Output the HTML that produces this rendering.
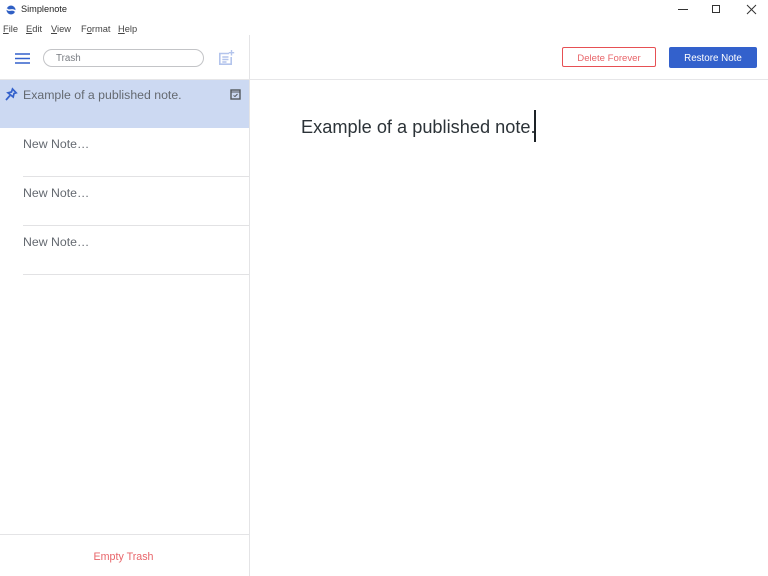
<!DOCTYPE html>
<html><head><meta charset="utf-8"><title>Simplenote</title>
<style>
html,body{margin:0;padding:0;background:#fff;width:768px;height:576px;overflow:hidden}
body{font-family:"Liberation Sans",sans-serif;position:relative}
.a{position:absolute;white-space:nowrap}
u{text-underline-offset:1px}
.menu{top:24px;font-size:9.3px;line-height:11px;color:#444}
.note{left:23px;font-size:12.3px;line-height:16px;color:#646970}
.sep{left:23px;width:226px;height:1px;background:#e2e2e4}
svg{position:absolute;overflow:visible}
</style></head><body>
<svg style="left:6px;top:5px" width="10" height="10" viewBox="0 0 10 10"><circle cx="5" cy="5" r="4.5" fill="#2f5fc4"/><path d="M0.5 3.6C3 7.4 6.5 2.6 9.5 6.4" stroke="#fff" stroke-width="1.5" fill="none"/></svg>
<div class="a" style="left:21px;top:3px;font-size:9.2px;line-height:12px;color:#222">Simplenote</div>
<div class="a menu" style="left:3px"><u>F</u>ile</div>
<div class="a menu" style="left:26px"><u>E</u>dit</div>
<div class="a menu" style="left:51px"><u>V</u>iew</div>
<div class="a menu" style="left:81px">F<u>o</u>rmat</div>
<div class="a menu" style="left:118px"><u>H</u>elp</div>
<svg style="left:0;top:0" width="768" height="20"><path d="M678 9.5H688" stroke="#333"/><rect x="712.5" y="5.5" width="7" height="7" fill="none" stroke="#333"/><path d="M747 5L756 14M756 5L747 14" stroke="#333"/></svg>

<svg style="left:15px;top:53px" width="15" height="11"><path d="M0 1H15M0 5.5H15M0 10H15" stroke="#3361cc" stroke-width="1.6"/></svg>
<div class="a" style="left:43px;top:49px;width:159px;height:16px;border:1px solid #c3c4c7;border-radius:9px"></div>
<div class="a" style="left:56px;top:52px;font-size:9.8px;line-height:13px;color:#787c82">Trash</div>
<svg style="left:219px;top:50px" width="16" height="16" viewBox="0 0 16 16" fill="none" stroke="#b3c4ec" stroke-width="1.6"><path d="M10 3.5H0.8v10.7h11.4V7"/><path d="M3.3 7H9.5M3.3 9.5H9.5M3.3 12H7.5"/><path d="M12.5 0V5.5M9.8 2.7H15.2" stroke-width="1.4"/></svg>
<div class="a" style="left:249px;top:35px;width:1px;height:541px;background:#e4e4e6"></div>
<div class="a" style="left:0;top:79px;width:768px;height:1px;background:#e6e6e8"></div>

<div class="a" style="left:0;top:80px;width:249px;height:48px;background:#ccd9f2"></div>
<svg style="left:5px;top:88px" width="12" height="13" viewBox="0 0 12 13" fill="#ccd9f2" stroke="#3361cc" stroke-width="1.7"><path d="M7.5 1L11.2 4.8L9 5.5L8.2 9L3 4.8L6.5 4Z"/><path d="M5 7.5L1 12" fill="none"/></svg>
<div class="a note" style="top:87px">Example of a published note.</div>
<svg style="left:230px;top:89px" width="11" height="11" viewBox="0 0 11 11" fill="none" stroke="#53575c"><rect x="1" y="1" width="9" height="9" stroke-width="1.4"/><path d="M1 3H10" stroke-width="1"/><path d="M3.5 6.5L5 7.5L7.5 5" stroke-width="1"/></svg>
<div class="a note" style="top:136px">New Note…</div>
<div class="a sep" style="top:176px"></div>
<div class="a note" style="top:185px">New Note…</div>
<div class="a sep" style="top:225px"></div>
<div class="a note" style="top:234px">New Note…</div>
<div class="a sep" style="top:274px"></div>

<div class="a" style="left:0;top:534px;width:249px;height:1px;background:#e4e4e6"></div>
<div class="a" style="left:0;top:550px;width:249px;padding-right:2px;box-sizing:border-box;text-align:center;font-size:10.7px;line-height:14px;color:#e8656a">Empty Trash</div>

<div class="a" style="left:562px;top:47px;width:92px;height:18px;border:1.5px solid #e65054;border-radius:2px;text-align:center;font-size:9.6px;line-height:21px;color:#e8656a">Delete Forever</div>
<div class="a" style="left:669px;top:47px;width:88px;height:21px;background:#3361cc;border-radius:2px;text-align:center;font-size:9.8px;line-height:23px;color:#fff">Restore Note</div>

<div class="a" style="left:301px;top:116px;font-size:18.2px;line-height:22px;color:#2c3338">Example of a published note.</div>
<div class="a" style="left:534px;top:110px;width:2px;height:32px;background:#1d2327"></div>
</body></html>
